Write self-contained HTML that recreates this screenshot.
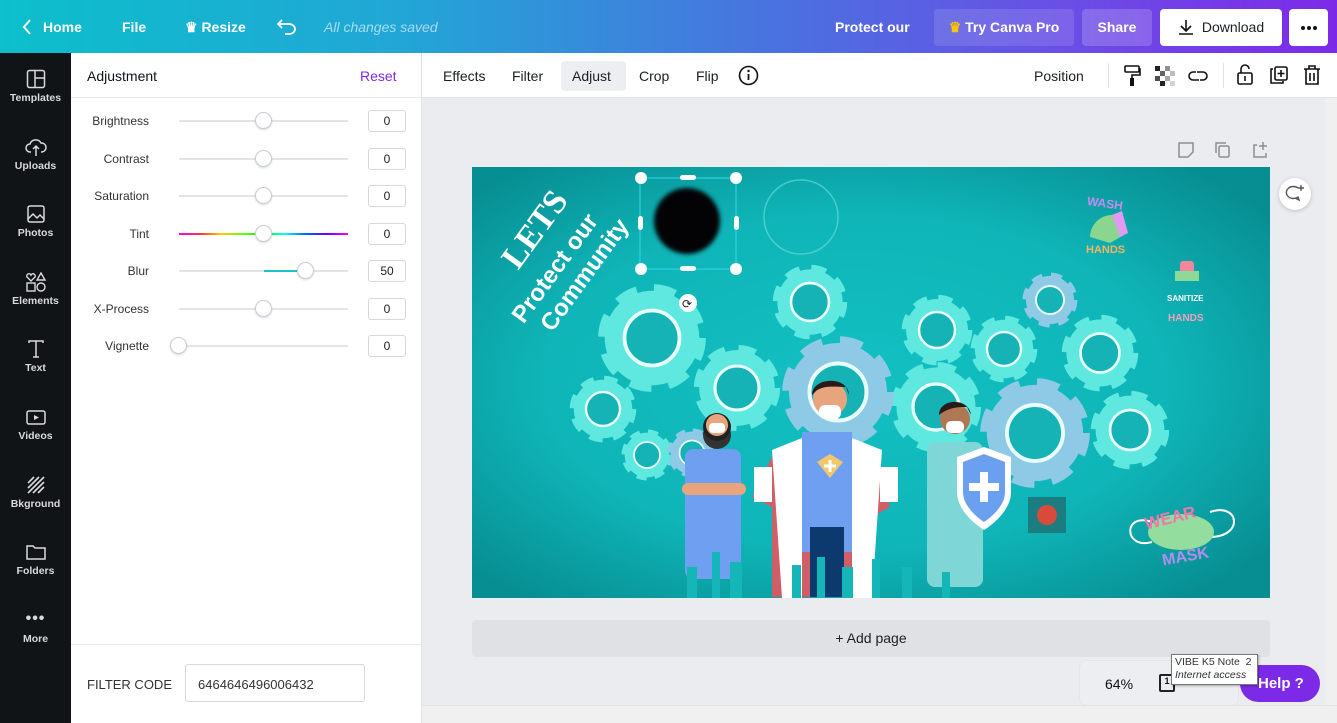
<!DOCTYPE html>
<html><head><meta charset="utf-8">
<style>
*{box-sizing:border-box;margin:0;padding:0}
body{width:1337px;height:723px;overflow:hidden;font-family:"Liberation Sans",sans-serif;background:#ebecf0;position:relative;font-size:13px;color:#0e1318}
.abs{position:absolute}
#top{left:0;top:0;width:1337px;height:53px;background:linear-gradient(90deg,#0cbfcb 0%,#22a6d6 30%,#4d6ee0 60%,#6a4ee6 80%,#7d2ae8 100%)}
#top .t{position:absolute;top:19px;color:#fff;font-weight:bold;font-size:14px}
.btn{position:absolute;top:9px;height:37px;border-radius:4px;color:#fff;font-weight:bold;font-size:14px;line-height:37px;text-align:center}
#side{left:0;top:53px;width:71px;height:670px;background:#111417}
.si{position:absolute;left:0;width:71px;text-align:center;color:#d9dadb;font-size:10.5px;font-weight:bold}
.si svg{display:block;margin:0 auto 3px}
#panel{left:71px;top:53px;width:351px;height:670px;background:#fff;border-right:1px solid #dfe1e4}
.row{position:absolute;left:0;width:351px;height:22px}
.row .l{position:absolute;right:273px;top:4px;font-size:12px;color:#333}
.row .tr{position:absolute;left:108px;top:10px;width:169px;height:2px;background:#e2e4e7}
.row .k{position:absolute;top:2px;width:17px;height:17px;border-radius:50%;background:#fff;border:1px solid #c9ccd1;box-shadow:0 1px 2px rgba(0,0,0,.15)}
.row .v{position:absolute;left:297px;top:0;width:38px;height:22px;border:1px solid #d4d7db;border-radius:3px;text-align:center;font-size:12px;line-height:20px;color:#222}
#tool{left:422px;top:53px;width:915px;height:45px;background:#fff;border-bottom:1px solid #dfe1e4}
#tool .t{position:absolute;top:15px;font-size:14px;color:#1b1e22}
</style></head><body>

<div id="top" class="abs">
  <svg class="abs" style="left:22px;top:19px" width="10" height="16"><path d="M8 1L2 8l6 7" stroke="#fff" stroke-width="2" fill="none"/></svg>
  <span class="t" style="left:43px">Home</span>
  <span class="t" style="left:122px">File</span>
  <span class="t" style="left:185px">♛ Resize</span>
  <svg class="abs" style="left:277px;top:17px" width="22" height="18"><path d="M5 3L1 7l4 4M1 7h11a6 5 0 0 1 0 10H8" stroke="#fff" stroke-width="1.8" fill="none"/></svg>
  <span class="abs" style="left:324px;top:19px;color:rgba(255,255,255,.6);font-style:italic;font-size:14px">All changes saved</span>
  <span class="t" style="left:835px">Protect our</span>
  <div class="btn" style="left:934px;width:140px;background:rgba(255,255,255,.12)"><span style="color:#ffc400">♛</span> Try Canva Pro</div>
  <div class="btn" style="left:1082px;width:70px;background:rgba(255,255,255,.18)">Share</div>
  <div class="btn" style="left:1160px;width:122px;background:#fff;color:#1b1e22;font-weight:normal">
    <svg style="vertical-align:-3px;margin-right:8px" width="16" height="16"><path d="M8 1v10M3 7l5 5 5-5M1 15h14" stroke="#111" stroke-width="1.6" fill="none"/></svg>Download</div>
  <div class="btn" style="left:1289px;width:39px;background:#fff"><svg width="20" height="37"><circle cx="4" cy="19" r="2" fill="#111"/><circle cx="10" cy="19" r="2" fill="#111"/><circle cx="16" cy="19" r="2" fill="#111"/></svg></div>
</div>

<div id="side" class="abs">
  <div class="si" style="top:16px"><svg width="20" height="20"><rect x="1.5" y="1.5" width="17" height="17" rx="2" stroke="#d9dadb" fill="none" stroke-width="1.5"/><path d="M9 2v16M9 9h9" stroke="#d9dadb" stroke-width="1.5"/></svg>Templates</div>
  <div class="si" style="top:84px"><svg width="22" height="20"><path d="M6 15H5a4 4 0 0 1 0-8 6 6 0 0 1 11-1 4 4 0 0 1 1 9h-1M11 9v10M8 12l3-3 3 3" stroke="#d9dadb" fill="none" stroke-width="1.5"/></svg>Uploads</div>
  <div class="si" style="top:151px"><svg width="20" height="20"><rect x="2" y="2" width="16" height="16" rx="2" stroke="#d9dadb" fill="none" stroke-width="1.5"/><path d="M2 15l5-5 4 4 3-3 4 4" stroke="#d9dadb" fill="none" stroke-width="1.5"/></svg>Photos</div>
  <div class="si" style="top:219px"><svg width="22" height="20"><path d="M6 9L2 5a2 2 0 0 1 4-2 2 2 0 0 1 4 2z" stroke="#d9dadb" fill="none" stroke-width="1.4"/><path d="M16 1l4 7h-8z" stroke="#d9dadb" fill="none" stroke-width="1.4"/><rect x="2" y="11" width="8" height="8" stroke="#d9dadb" fill="none" stroke-width="1.4"/><circle cx="16" cy="15" r="4" stroke="#d9dadb" fill="none" stroke-width="1.4"/></svg>Elements</div>
  <div class="si" style="top:286px"><svg width="20" height="20"><path d="M3 4V2h14v2M10 2v16M7 18h6" stroke="#d9dadb" fill="none" stroke-width="1.5"/></svg>Text</div>
  <div class="si" style="top:354px"><svg width="22" height="20"><rect x="2" y="4" width="18" height="13" rx="2" stroke="#d9dadb" fill="none" stroke-width="1.5"/><path d="M9 8l5 2.5-5 2.5z" fill="#d9dadb"/></svg>Videos</div>
  <div class="si" style="top:422px"><svg width="20" height="20"><path d="M2 8l6-6M2 13l11-11M2 18l16-16M7 18l11-11M12 18l6-6" stroke="#d9dadb" stroke-width="1.6"/></svg>Bkground</div>
  <div class="si" style="top:489px"><svg width="22" height="20"><path d="M2 4h6l2 2h10v11H2z" stroke="#d9dadb" fill="none" stroke-width="1.5"/></svg>Folders</div>
  <div class="si" style="top:558px"><div style="font-size:16px;letter-spacing:1px;line-height:16px;margin-bottom:6px">•••</div>More</div>
</div>

<div id="panel" class="abs">
  <span class="abs" style="left:16px;top:15px;font-size:14px">Adjustment</span>
  <span class="abs" style="left:289px;top:15px;font-size:14px;color:#7d2ae8">Reset</span>
  <div class="abs" style="left:0;top:44px;width:351px;height:1px;background:#e6e8eb"></div>
  <div class="row" style="top:57px"><span class="l">Brightness</span><div class="tr"></div><div class="k" style="left:184px"></div><div class="v">0</div></div>
  <div class="row" style="top:95px"><span class="l">Contrast</span><div class="tr"></div><div class="k" style="left:184px"></div><div class="v">0</div></div>
  <div class="row" style="top:132px"><span class="l">Saturation</span><div class="tr"></div><div class="k" style="left:184px"></div><div class="v">0</div></div>
  <div class="row" style="top:170px"><span class="l">Tint</span><div class="tr" style="background:linear-gradient(90deg,#f0f,#f33,#fc0,#6f0,#0f0,#0ff,#06f,#60f,#f0f)"></div><div class="k" style="left:184px"></div><div class="v">0</div></div>
  <div class="row" style="top:207px"><span class="l">Blur</span><div class="tr"></div><div class="abs" style="left:193px;top:10px;width:36px;height:2px;background:#1cc3c6"></div><div class="k" style="left:226px"></div><div class="v">50</div></div>
  <div class="row" style="top:245px"><span class="l">X-Process</span><div class="tr"></div><div class="k" style="left:184px"></div><div class="v">0</div></div>
  <div class="row" style="top:282px"><span class="l">Vignette</span><div class="tr"></div><div class="k" style="left:99px"></div><div class="v">0</div></div>
  <div class="abs" style="left:0;top:591px;width:351px;height:1px;background:#e6e8eb"></div>
  <span class="abs" style="left:16px;top:624px;font-size:13px;color:#333">FILTER CODE</span>
  <div class="abs" style="left:114px;top:611px;width:180px;height:38px;border:1px solid #d4d7db;border-radius:3px;padding:12px 12px;font-size:13px;color:#333">6464646496006432</div>
</div>

<div id="tool" class="abs">
  <span class="t" style="left:21px">Effects</span>
  <span class="t" style="left:90px">Filter</span>
  <div class="abs" style="left:139px;top:8px;width:65px;height:30px;background:#eceef1;border-radius:4px"></div>
  <span class="t" style="left:150px">Adjust</span>
  <span class="t" style="left:217px">Crop</span>
  <span class="t" style="left:274px">Flip</span>
  <svg class="abs" style="left:316px;top:12px" width="21" height="21"><circle cx="10.5" cy="10.5" r="9" stroke="#111" stroke-width="1.6" fill="none"/><path d="M10.5 9v6" stroke="#111" stroke-width="1.8"/><circle cx="10.5" cy="6" r="1.2" fill="#111"/></svg>
  <span class="t" style="left:612px">Position</span>
  <div class="abs" style="left:686px;top:10px;width:1px;height:25px;background:#dfe1e4"></div>
  <svg class="abs" style="left:701px;top:12px" width="18" height="22"><rect x="2" y="1" width="14" height="6" rx="1" stroke="#111" stroke-width="1.6" fill="none"/><path d="M16 4h1v6H9v3" stroke="#111" stroke-width="1.6" fill="none"/><rect x="7" y="13" width="4" height="8" fill="#111"/></svg>
  <svg class="abs" style="left:733px;top:13px" width="20" height="20"><g fill="#222"><rect x="0" y="0" width="5" height="5"/><rect x="10" y="0" width="5" height="5" opacity=".5"/><rect x="5" y="5" width="5" height="5" opacity=".7"/><rect x="15" y="5" width="5" height="5" opacity=".3"/><rect x="0" y="10" width="5" height="5" opacity=".8"/><rect x="10" y="10" width="5" height="5" opacity=".4"/><rect x="5" y="15" width="5" height="5"/><rect x="15" y="15" width="5" height="5" opacity=".2"/></g></svg>
  <svg class="abs" style="left:765px;top:14px" width="22" height="18"><path d="M9 5H6a4 4 0 0 0 0 8h6M13 13h3a4 4 0 0 0 0-8h-6" stroke="#111" stroke-width="1.6" fill="none"/></svg>
  <div class="abs" style="left:801px;top:10px;width:1px;height:25px;background:#dfe1e4"></div>
  <svg class="abs" style="left:814px;top:11px" width="18" height="22"><path d="M5 9V5a4 4 0 0 1 8 0" stroke="#111" stroke-width="1.6" fill="none"/><rect x="2" y="9" width="14" height="11" rx="1.5" stroke="#111" stroke-width="1.6" fill="none"/><path d="M9 12v5" stroke="#111" stroke-width="1.6"/></svg>
  <svg class="abs" style="left:847px;top:12px" width="20" height="20"><path d="M4 4H2v14h12v-2" stroke="#111" stroke-width="1.6" fill="none"/><rect x="6" y="2" width="12" height="13" rx="1.5" stroke="#111" stroke-width="1.6" fill="none"/><path d="M12 5v7M8.5 8.5h7" stroke="#111" stroke-width="1.6"/></svg>
  <svg class="abs" style="left:881px;top:12px" width="18" height="20"><path d="M1 4h16M6 4V1h6v3M3 4v15h12V4M7 8v8M11 8v8" stroke="#111" stroke-width="1.6" fill="none"/></svg>
</div>

<svg class="abs" style="left:1177px;top:141px" width="92" height="18"><path d="M2 2h14v9l-5 5H2z" stroke="#8a8d91" stroke-width="1.5" fill="none"/><rect x="42" y="5" width="10" height="11" rx="1.5" stroke="#8a8d91" stroke-width="1.5" fill="none"/><path d="M39 12V2h10" stroke="#8a8d91" stroke-width="1.5" fill="none"/><path d="M80 4h-3v12h12v-4M86 1v8M82 5h8" stroke="#8a8d91" stroke-width="1.5" fill="none"/></svg>
<div class="abs" style="left:1279px;top:178px;width:32px;height:32px;border-radius:50%;background:#fff;box-shadow:0 1px 4px rgba(0,0,0,.2)"></div>
<svg class="abs" style="left:1284px;top:182px" width="22" height="22"><path d="M14 6a7 6 0 1 0 0 9l1 3-4-2" stroke="#555" stroke-width="1.4" fill="none"/><path d="M17 3v6M14 6h6" stroke="#555" stroke-width="1.4"/></svg>

<svg class="abs" style="left:472px;top:167px" width="798" height="431" viewBox="0 0 798 431">
<defs>
<radialGradient id="bg" cx="48%" cy="50%" r="65%"><stop offset="0" stop-color="#12c0c2"/><stop offset=".6" stop-color="#0fb5b8"/><stop offset="1" stop-color="#078e92"/></radialGradient>
<g id="gear">
<circle r="0.86" fill="currentColor" stroke="currentColor" stroke-width="0.24" stroke-dasharray="0.38 0.3"/>
<circle r="0.78" fill="currentColor"/>
<circle r="0.5" fill="#15b3b6" stroke="#e8fffd" stroke-width="0.07"/>
</g>
</defs>
<rect width="798" height="431" fill="url(#bg)"/>
<g color="#5fe8e0">
<use href="#gear" transform="translate(180,171) scale(55)"/>
<use href="#gear" transform="translate(338,135) scale(38)"/>
<use href="#gear" transform="translate(265,221) scale(44)"/>
<use href="#gear" transform="translate(131,242) scale(34)"/>
<use href="#gear" transform="translate(175,288) scale(26)"/>
<use href="#gear" transform="translate(465,163) scale(36)"/>
<use href="#gear" transform="translate(532,182) scale(34)"/>
<use href="#gear" transform="translate(628,186) scale(39)"/>
<use href="#gear" transform="translate(464,240) scale(46)"/>
<use href="#gear" transform="translate(658,263) scale(40)"/>
</g>
<g color="#8ec9e6">
<use href="#gear" transform="translate(366,225) scale(57)"/>
<use href="#gear" transform="translate(578,133) scale(28)"/>
<use href="#gear" transform="translate(563,266) scale(56)"/>
<use href="#gear" transform="translate(220,286) scale(25)"/>
</g>
<circle cx="329" cy="50" r="37" stroke="#5fd8d6" stroke-width="1.5" fill="none" opacity=".7"/>
<circle cx="215" cy="54" r="33" fill="#030306" filter="blur(2px)"/>
<g fill="#fff" font-family="Liberation Serif,serif" font-weight="bold" transform="translate(46,104) rotate(-54)">
<text x="0" y="0" font-size="34">LETS</text>
<text x="-40" y="36" font-size="24" font-family="Liberation Sans,sans-serif">Protect our</text>
<text x="-30" y="64" font-size="24" font-family="Liberation Sans,sans-serif">Community</text>
</g>
<rect x="168" y="11" width="96" height="91" stroke="#2bd3e0" stroke-width="1.2" fill="none"/>
<g fill="#fff"><circle cx="169" cy="11" r="6"/><circle cx="264" cy="11" r="6"/><circle cx="169" cy="102" r="6"/><circle cx="264" cy="102" r="6"/>
<rect x="208" y="8" width="16" height="5" rx="2.5"/><rect x="208" y="99" width="16" height="5" rx="2.5"/><rect x="166" y="49" width="5" height="14" rx="2.5"/><rect x="262" y="49" width="5" height="14" rx="2.5"/></g>
<circle cx="216" cy="136" r="9" fill="#fff"/><text x="210" y="141" font-size="12" fill="#222">⟳</text>
<g>
<circle cx="245" cy="268" r="14" fill="#333"/><circle cx="245" cy="260" r="14" fill="#222"/>
<rect x="218" y="290" width="56" height="130" rx="8" fill="#6f9ff0" transform="translate(-5,-8)"/>
<circle cx="245" cy="258" r="11" fill="#e8a57d"/>
<rect x="237" y="256" width="16" height="10" rx="4" fill="#fff"/>
<rect x="210" y="316" width="64" height="12" rx="6" fill="#e8a57d"/>
<path d="M300 430V340l-20-10 20-40 30-13h40l30 13 18 50-18 10v80z" fill="#e5555e" opacity=".9"/>
<rect x="330" y="265" width="50" height="120" fill="#6f9ff0"/>
<path d="M300 283l30-12v160h-20zM380 271l30 12-10 148h-20z" fill="#fff"/>
<rect x="282" y="300" width="18" height="35" fill="#fff"/><rect x="408" y="300" width="18" height="35" fill="#fff"/>
<rect x="338" y="360" width="34" height="70" fill="#0d3a6e"/>
<circle cx="358" cy="232" r="17" fill="#e8a57d"/>
<path d="M340 228c0-18 36-20 37 0l-3-8c-10 0-22-2-30 4z" fill="#2a1a18"/>
<rect x="347" y="238" width="22" height="14" rx="6" fill="#fff"/>
<path d="M345 295l13-8 13 8-13 16z" fill="#f2c66b"/><path d="M358 293v12M352 299h12" stroke="#fff" stroke-width="3"/>
<rect x="455" y="275" width="56" height="145" rx="8" fill="#7fd6d6"/>
<circle cx="483" cy="252" r="15" fill="#b07755"/>
<path d="M467 248c0-17 30-18 32 0l-4-8c-8 0-18 0-28 8z" fill="#2a1a18"/>
<rect x="474" y="254" width="18" height="12" rx="5" fill="#fff"/>
<path d="M512 280l27 10v35c0 22-27 38-27 38s-27-16-27-38v-35z" fill="#fff"/>
<path d="M512 287l21 8v30c0 17-21 30-21 30s-21-13-21-30v-30z" fill="#6b9ff0"/>
<path d="M512 305v30M497 320h30" stroke="#fff" stroke-width="8"/>
<g fill="#14b6b8"><rect x="215" y="400" width="10" height="31"/><rect x="240" y="385" width="8" height="46"/><rect x="258" y="395" width="12" height="36"/><rect x="320" y="398" width="9" height="33"/><rect x="345" y="390" width="8" height="41"/><rect x="370" y="400" width="11" height="31"/><rect x="400" y="392" width="8" height="39"/><rect x="430" y="400" width="10" height="31"/><rect x="470" y="405" width="8" height="26"/></g>
</g>
<rect x="556" y="330" width="38" height="36" fill="#1c7d80"/><circle cx="575" cy="348" r="10" fill="#d94a3a"/>
<g font-family="Liberation Sans,sans-serif" font-weight="bold">
<text x="615" y="40" font-size="12" fill="#c78aef" transform="rotate(8 630 36)">WASH</text>
<path d="M618 70c0-12 10-22 22-22s14 8 12 20l-14 8z" fill="#8bd68e"/><path d="M640 48l10-4 6 22-8 4z" fill="#e09af0"/>
<text x="614" y="86" font-size="11" fill="#f3b562">HANDS</text>
<rect x="708" y="94" width="14" height="14" rx="3" fill="#f2869a"/><rect x="703" y="104" width="24" height="10" fill="#8ed898"/>
<text x="695" y="134" font-size="8" fill="#fff">SANITIZE</text>
<text x="696" y="154" font-size="10" fill="#f2a0c0">HANDS</text>
<path d="M680 355c-30-10-28 28 0 20M738 345c30-10 34 25 0 25" stroke="#fff" stroke-width="2" fill="none"/>
<ellipse cx="709" cy="365" rx="33" ry="18" fill="#93dd9e"/>
<text x="672" y="356" font-size="17" fill="#f078a8" transform="rotate(-14 700 350)">WEAR</text>
<text x="690" y="395" font-size="16" fill="#b58cf0" transform="rotate(-10 710 390)">MASK</text>
</g>
</svg>

<div class="abs" style="left:472px;top:620px;width:798px;height:37px;background:#dfe1e5;border-radius:4px;text-align:center;line-height:37px;font-size:14px;color:#1b1e22">+ Add page</div>

<div class="abs" style="left:1079px;top:660px;width:160px;height:46px;background:#eceef1;border:1px solid #e3e5e8;border-radius:8px"></div>
<span class="abs" style="left:1105px;top:676px;font-size:14px">64%</span>
<div class="abs" style="left:1159px;top:674px;width:16px;height:18px;border:2px solid #222;border-radius:2px;font-size:9px;text-align:center;font-weight:bold">1</div>
<div class="abs" style="left:1240px;top:665px;width:80px;height:37px;background:#7d2ae8;border-radius:19px;color:#fff;font-size:15px;font-weight:bold;line-height:37px;padding-left:18px">Help ?</div>
<div class="abs" style="left:1171px;top:654px;width:87px;height:31px;background:#fff;border:1px solid #777;font-size:10.5px;color:#333;padding:1px 3px;line-height:13px;white-space:nowrap;overflow:hidden;box-shadow:1px 1px 2px rgba(0,0,0,.3)">VIBE K5 Note&nbsp;&nbsp;2<br><i>Internet access</i></div>

<div class="abs" style="left:1325px;top:98px;width:12px;height:607px;background:#f0f0f0"></div>
<div class="abs" style="left:422px;top:705px;width:915px;height:18px;background:#f0f0f0;border-top:1px solid #e2e2e2"></div>
</body></html>
